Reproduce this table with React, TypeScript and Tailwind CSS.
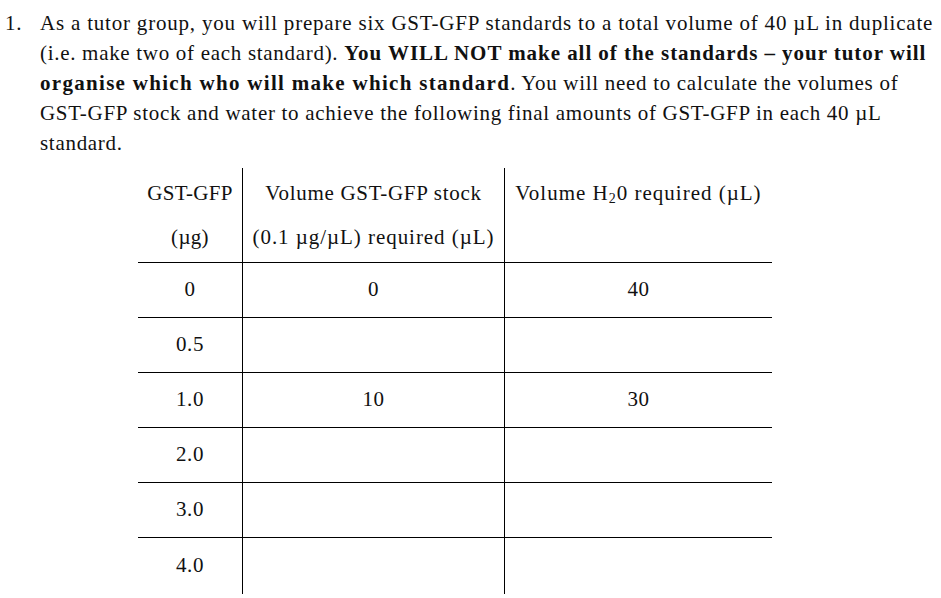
const rows = [
  { amount: "0", stock: "0", water: "40" },
  { amount: "0.5", stock: "", water: "" },
  { amount: "1.0", stock: "10", water: "30" },
  { amount: "2.0", stock: "", water: "" },
  { amount: "3.0", stock: "", water: "" },
  { amount: "4.0", stock: "", water: "" },
];

export default function App() {
  return (
    <div className="w-[941px] h-[598px] overflow-hidden bg-white text-[#111] font-['Liberation_Serif',serif]">
      {/* Вопрос */}
      <div className="flex pt-[8px] pl-[5px] text-[21px] leading-[30px] tracking-[0.7px]">
        <div className="w-[35px] shrink-0">1.</div>
        <div className="whitespace-nowrap">
          <span className="tracking-[0.8px]">
            As a tutor group, you will prepare six GST-GFP standards to a total volume of 40 µL in duplicate
          </span>
          <br />
          (i.e. make two of each standard). <b className="tracking-[0.95px]">You WILL NOT make all of the standards – your tutor will</b>
          <br />
          <b className="tracking-[1.3px]">organise which who will make which standard</b>. You will need to calculate the volumes of
          <br />
          GST-GFP stock and water to achieve the following final amounts of GST-GFP in each 40 µL
          <br />
          standard.
        </div>
      </div>

      {/* Таблица */}
      <div className="ml-[138px] mt-[10px] w-[634px] text-[21px]">
        <div className="grid grid-cols-[105px_262px_267px] border-b border-black tracking-[0.7px]">
          <div className="border-r border-black py-[3px] leading-[44px] text-center tracking-[0.3px]">
            GST-GFP
            <br />
            (µg)
          </div>
          <div className="border-r border-black py-[3px] leading-[44px] text-center">
            Volume GST-GFP stock
            <br />
            <span className="tracking-[0.95px]">(0.1 µg/µL) required (µL)</span>
          </div>
          <div className="py-[3px] leading-[44px] text-center tracking-[1px]">
            Volume H<sub className="text-[14px] align-baseline relative top-[3px]">2</sub>0 required (µL)
          </div>
        </div>
        {rows.map((r, i) => (
          <div
            key={r.amount}
            className={
              i < rows.length - 1
                ? "grid grid-cols-[105px_262px_267px] h-[55px] border-b border-black tracking-[0.6px]"
                : "grid grid-cols-[105px_262px_267px] h-[56px] tracking-[0.6px]"
            }
          >
            <div className="border-r border-black flex items-center justify-center">{r.amount}</div>
            <div className="border-r border-black flex items-center justify-center">{r.stock}</div>
            <div className="flex items-center justify-center">{r.water}</div>
          </div>
        ))}
      </div>
    </div>
  );
}
